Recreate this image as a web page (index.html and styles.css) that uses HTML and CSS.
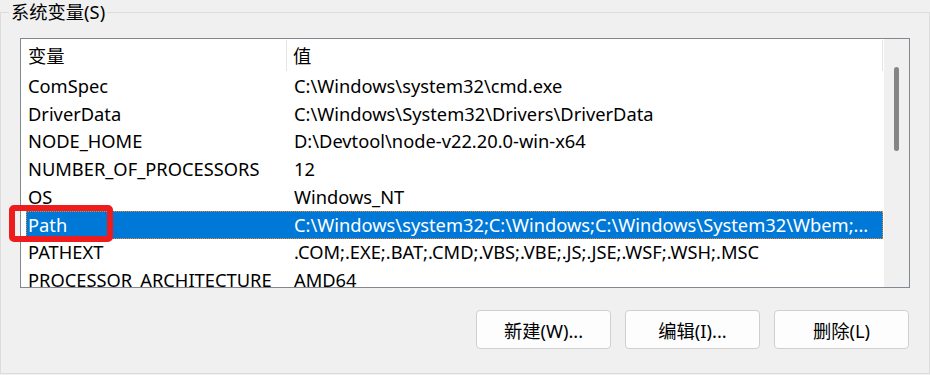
FILE: index.html
```html
<!DOCTYPE html>
<html lang="zh-CN">
<head>
<meta charset="utf-8">
<title>系统变量</title>
<link rel="stylesheet" href="styles.css">
</head>
<body>
<fieldset class="group">
  <legend class="group-title">系统变量(S)</legend>
  <div class="listbox">
    <div class="list-content">
      <div class="list-header">
        <div class="hcell hcell-name">变量</div>
        <div class="hcell hcell-value">值</div>
      </div>
      <div class="row"><div class="cell name">ComSpec</div><div class="cell value">C:\Windows\system32\cmd.exe</div></div>
      <div class="row"><div class="cell name">DriverData</div><div class="cell value">C:\Windows\System32\Drivers\DriverData</div></div>
      <div class="row"><div class="cell name">NODE_HOME</div><div class="cell value">D:\Devtool\node-v22.20.0-win-x64</div></div>
      <div class="row"><div class="cell name">NUMBER_OF_PROCESSORS</div><div class="cell value">12</div></div>
      <div class="row"><div class="cell name">OS</div><div class="cell value">Windows_NT</div></div>
      <div class="row selected"><div class="cell name">Path</div><div class="cell value">C:\Windows\system32;C:\Windows;C:\Windows\System32\Wbem;...</div></div>
      <div class="row"><div class="cell name">PATHEXT</div><div class="cell value">.COM;.EXE;.BAT;.CMD;.VBS;.VBE;.JS;.JSE;.WSF;.WSH;.MSC</div></div>
      <div class="row"><div class="cell name">PROCESSOR_ARCHITECTURE</div><div class="cell value">AMD64</div></div>
    </div>
    <div class="scrollbar"><div class="thumb"></div></div>
    <div class="highlight-box"></div>
  </div>
  <div class="buttons">
    <button class="btn">新建(W)...</button>
    <button class="btn">编辑(I)...</button>
    <button class="btn">删除(L)</button>
  </div>
</fieldset>
</body>
</html>
```
FILE: styles.css
```css
html, body {
  margin: 0;
  padding: 0;
  background: #f0f0f0;
}
body {
  width: 930px;
  height: 375px;
  overflow: hidden;
  font-family: "Noto Sans", "Noto Sans CJK SC", sans-serif;
  font-size: 18.3px;
  color: #000;
}
.group {
  box-sizing: border-box;
  margin: 0;
  width: 930px;
  height: 374px;
  border: 1px solid #dcdcdc;
  padding: 0 19px 0 19px;
  min-width: 0;
}
.group-title {
  margin-left: -11px;
  padding: 0 2px;
  line-height: 24px;
  font-size: 18.3px;
}
.listbox {
  position: relative;
  margin-top: 14px;
  height: 250px;
  box-sizing: border-box;
  border: 1px solid #828790;
  background: #fff;
  display: flex;
}
.list-content {
  flex: 1;
  overflow: hidden;
}
.list-header {
  display: flex;
  height: 33px;
  align-items: center;
}
.hcell {
  box-sizing: border-box;
  height: 31px;
  line-height: 31px;
  white-space: nowrap;
  overflow: hidden;
}
.hcell-name {
  width: 266px;
  padding-left: 7px;
  border-right: 1px solid #e5e5e5;
}
.hcell-value {
  width: 596px;
  padding-left: 6px;
  border-right: 1px solid #e5e5e5;
}
.row {
  display: flex;
  height: 27.75px;
  margin-left: 5px;
  align-items: center;
  box-sizing: border-box;
}
.cell {
  white-space: nowrap;
  overflow: hidden;
  box-sizing: border-box;
  line-height: 26px;
}
.name {
  width: 261px;
  padding-left: 2px;
  padding-right: 10px;
}
.value {
  flex: 1;
  padding-left: 7px;
}
.selected {
  background: #0078d7;
  color: #fff;
  outline: 1px dotted #f08a24;
  outline-offset: -1px;
}
.highlight-box {
  position: absolute;
  left: -12px;
  top: 166px;
  width: 104px;
  height: 37px;
  box-sizing: border-box;
  border: 6px solid #ee1c1c;
  border-radius: 5px;
}
.scrollbar {
  width: 26px;
  background: #f0f0f0;
  border-left: 1px solid #fff;
  box-sizing: border-box;
}
.thumb {
  margin: 28px 0 0 10px;
  width: 5px;
  height: 84px;
  border-radius: 3px;
  background: #858585;
}
.buttons {
  display: flex;
  justify-content: flex-end;
  gap: 14px;
  margin-top: 22px;
  margin-right: 1px;
}
.btn {
  width: 135px;
  height: 39px;
  box-sizing: border-box;
  background: #fdfdfd;
  border: 1px solid #d0d0d0;
  border-radius: 4px;
  font-family: "Noto Sans", "Noto Sans CJK SC", sans-serif;
  font-size: 18.3px;
  color: #000;
  padding: 0;
}
```
